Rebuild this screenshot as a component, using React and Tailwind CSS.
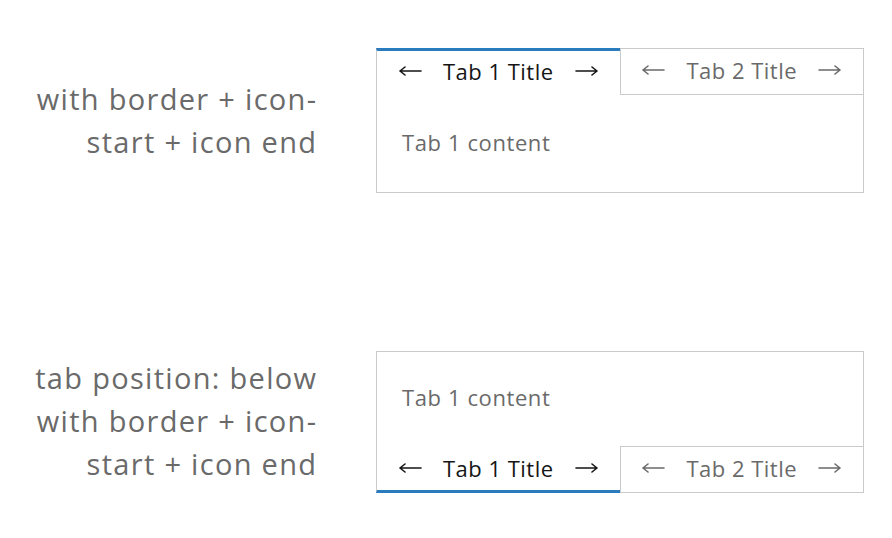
import React from 'react';

const font = { fontFamily: '"Open Sans", "Noto Sans", sans-serif' };

const Arrow = ({ dir }) => (
  <svg width="23" height="12" viewBox="0 0 23 12" fill="none" stroke="currentColor" strokeWidth="1.6" strokeLinecap="round" strokeLinejoin="round">
    {dir === 'left' ? (
      <path d="M1 6H22M1 6L6 2M1 6L6 10" />
    ) : (
      <path d="M22 6H1M22 6L17 2M22 6L17 10" />
    )}
  </svg>
);

const TabItem = ({ active, title, below }) => {
  let cls = 'flex-1 flex items-center justify-center gap-[21px] text-[22px] tracking-[0.5px] h-[47px] ';
  if (active) {
    cls += below
      ? 'text-[#151515] border-l border-l-[#cacaca] border-b-[3px] border-b-[#2b7bbf]'
      : 'text-[#151515] border-l border-l-[#cacaca] border-t-[3px] border-t-[#2b7bbf] pb-[4px]';
  } else {
    cls += 'text-[#6a6a6a] border border-[#cacaca] pb-[3px]';
  }
  return (
    <div className={cls}>
      <Arrow dir="left" />
      <span className="leading-none">{title}</span>
      <Arrow dir="right" />
    </div>
  );
};

const Content = ({ below }) => (
  <div
    className={`flex items-center px-[25px] text-[22px] tracking-[0.6px] text-[#6a6a6a] border-l border-r border-[#cacaca] ${
      below ? 'h-[95px] border-t pb-[3px]' : 'h-[98px] border-b pb-[2px]'
    }`}
  >
    Tab 1 content
  </div>
);

const Tabs = ({ below }) => (
  <div className="w-[488px] flex flex-col">
    {below && <Content below />}
    <div className="flex">
      <TabItem active title="Tab 1 Title" below={below} />
      <TabItem title="Tab 2 Title" below={below} />
    </div>
    {!below && <Content />}
  </div>
);

const Label = ({ lines }) => (
  <div className="w-[316px] text-right text-[29px] tracking-[1.3px] leading-[43px] text-[#6a6a6a]">
    {lines.map((l) => (
      <div key={l} className="mr-[-1.3px]">{l}</div>
    ))}
  </div>
);

export default function App() {
  return (
    <div className="w-[892px] h-[538px] bg-white flex flex-col pt-[48px] gap-[158px]" style={font}>
      <div className="flex items-center gap-[60px]">
        <div className="pb-[2px]">
          <Label lines={['with border + icon-', 'start + icon end']} />
        </div>
        <Tabs />
      </div>
      <div className="flex items-center gap-[60px]">
        <div className="pb-[4px]">
          <Label lines={['tab position: below', 'with border + icon-', 'start + icon end']} />
        </div>
        <Tabs below />
      </div>
    </div>
  );
}
